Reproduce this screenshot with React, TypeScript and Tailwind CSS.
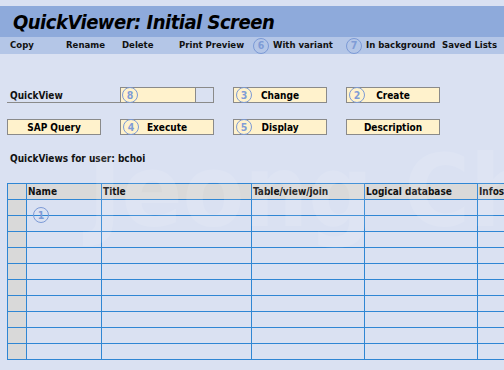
import type { ReactNode } from "react";

const font = { fontFamily: '"DejaVu Sans Condensed", "Liberation Sans", sans-serif' };

function Badge({ n }: { n: number }) {
  return (
    <span className="flex h-[16px] w-[16px] shrink-0 items-center justify-center rounded-full border-[1.5px] border-[#7c9ad6] text-[10.5px] leading-none font-bold text-[#7f9cd6]">
      {n}
    </span>
  );
}

function Btn({ badge, children }: { badge?: number; children: ReactNode }) {
  return (
    <div className="relative flex h-[16px] w-[94px] items-center justify-center border border-[#8a8a8a] bg-[#fff2cc] text-[10px] font-bold text-black">
      {badge && (
        <span className="absolute left-[2px] top-[-1px]">
          <Badge n={badge} />
        </span>
      )}
      {children}
    </div>
  );
}

const toolbar: { label: string; badge?: number; w: string }[] = [
  { label: "Copy", w: "w-[56px]" },
  { label: "Rename", w: "w-[56px]" },
  { label: "Delete", w: "w-[57px]" },
  { label: "Print Preview", w: "w-[74px]" },
  { label: "With variant", badge: 6, w: "w-[93px]" },
  { label: "In background", badge: 7, w: "w-[96px]" },
  { label: "Saved Lists", w: "w-[60px]" },
];

const columns = [
  { label: "", w: "w-[19px]" },
  { label: "Name", w: "w-[75px]" },
  { label: "Title", w: "w-[150px]" },
  { label: "Table/view/join", w: "w-[113px]" },
  { label: "Logical database", w: "w-[113px]" },
  { label: "Infoset", w: "w-[60px]" },
];

export default function App() {
  return (
    <div className="relative h-[370px] w-[504px] overflow-hidden bg-[#dae1f2] text-[#111]" style={font}>
      {/* Title */}
      <div className="mt-[6px] flex h-[31px] items-center bg-[#8eaadb] pl-[13px]">
        <h1 className="text-[20px] leading-none font-bold italic tracking-[-0.5px] text-black">
          QuickViewer: Initial Screen
        </h1>
      </div>

      {/* Toolbar */}
      <div className="flex h-[17px] items-center bg-[#b4c6e7] pl-[10px] text-[9.5px] font-bold">
        {toolbar.map((t) => (
          <div key={t.label} className={`flex items-center gap-[4px] ${t.w}`}>
            {t.badge && <Badge n={t.badge} />}
            <span className="whitespace-nowrap">{t.label}</span>
          </div>
        ))}
      </div>

      {/* Selection area */}
      <div className="mt-[33px] flex flex-col gap-[16px] pl-[7px]">
        <div className="flex items-center gap-[19px]">
          <div className="flex items-center">
            <div className="flex h-[16px] w-[113px] items-center border-b border-[#8a8a8a] pt-[2px] pl-[3px] text-[10px] font-bold">
              QuickView
            </div>
            <div className="flex h-[16px] w-[94px] border border-[#8a8a8a] bg-[#fff2cc]">
              <div className="flex flex-1 items-center pl-[1px]">
                <Badge n={8} />
              </div>
              <div className="w-[18px] border-l border-[#8a8a8a] bg-[#dae1f2]" />
            </div>
          </div>
          <Btn badge={3}>Change</Btn>
          <Btn badge={2}>Create</Btn>
        </div>
        <div className="flex items-center gap-[19px]">
          <Btn>SAP Query</Btn>
          <Btn badge={4}>Execute</Btn>
          <Btn badge={5}>Display</Btn>
          <Btn>Description</Btn>
        </div>
      </div>

      <p className="mt-[16px] pl-[10px] text-[10px] font-bold">QuickViews for user: bchoi</p>

      {/* Table */}
      <div className="relative mt-[17px] ml-[7px] w-[540px]">
        <table className="w-[530px] table-fixed border-collapse text-[10px]">
          <thead>
            <tr className="h-[16px] bg-[#d9d9d9]">
              {columns.map((c, i) => (
                <th
                  key={i}
                  className={`${c.w} overflow-hidden border border-[#2f86d4] px-[1px] text-left font-bold whitespace-nowrap`}
                >
                  {c.label}
                </th>
              ))}
            </tr>
          </thead>
          <tbody>
            {Array.from({ length: 10 }).map((_, r) => (
              <tr key={r} className="h-[16px]">
                {columns.map((c, i) => (
                  <td
                    key={i}
                    className={`${c.w} border border-[#2f86d4] ${i === 0 ? "bg-[#d9d9d9]" : "bg-[#dae1f2]"}`}
                  />
                ))}
              </tr>
            ))}
          </tbody>
        </table>
        <span className="absolute left-[26px] top-[24px]">
          <Badge n={1} />
        </span>
      </div>

      {/* Watermark */}
      <div className="pointer-events-none absolute left-[88px] top-[142px] text-[100px] leading-none font-bold whitespace-nowrap text-white/10">
        Jeong Choi
      </div>
    </div>
  );
}
